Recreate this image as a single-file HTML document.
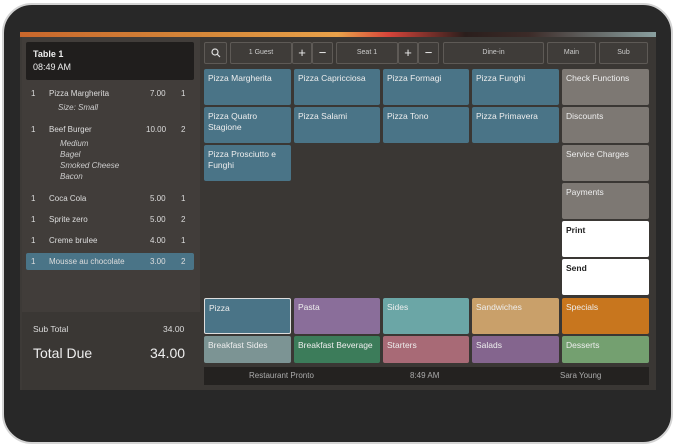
<!DOCTYPE html>
<html><head><style>
*{margin:0;padding:0;box-sizing:border-box}
body{width:676px;height:447px;background:#fff;font-family:"Liberation Sans",sans-serif;position:relative;overflow:hidden}
.frame{position:absolute;left:2px;top:3px;width:671px;height:441px;border-radius:30px;background:#282828;border:2px solid #d4d4d4}
.screen{position:absolute;left:20px;top:32px;width:636px;height:358px;background:#3d3a37;overflow:hidden}
.stripe{position:absolute;left:0;top:0;width:636px;height:5px;background:linear-gradient(90deg,#c9672c 0,#d6893a 30%,#e9a24a 50%,#d7443a 58%,#2a1e1c 70%,#3c2b28 80%,#8aa0a0 100%)}
.left{position:absolute;left:2px;top:5px;width:178px;height:353px;background:#413d3a}
.right{position:absolute;left:180px;top:5px;width:456px;height:353px;background:#3a3734}
.abs{position:absolute}
.hdr{left:4px;top:5px;width:168px;height:38px;background:#201e1d;border-radius:2px;color:#eee;font-size:9px;padding:6px 7px;line-height:13px}
.row{position:absolute;left:4px;width:168px;height:17px;color:#ddd;font-size:8px;line-height:17px}
.row span{position:absolute}
.mod{position:absolute;left:38px;color:#ccc;font-size:8px;font-style:italic}
.btn{position:absolute;border-radius:2px;color:#eee;font-size:8.5px;padding:4px 4px;line-height:11px}
.tb{position:absolute;top:5px;height:22px;border:1px solid #5e5a56;border-radius:2px;color:#ccc;font-size:7px;text-align:center;line-height:20px;background:#3f3c39}
.tile{background:#4a7487}
.grey{background:#7d7873}
</style></head><body>
<div class="frame"></div>
<div class="screen">
<div class="stripe"></div>
<div class="left">
 <div class="abs hdr"><b>Table 1</b><br>08:49 AM</div>
 <div class="row" style="top:48px"><span style="left:5px">1</span><span style="left:23px">Pizza Margherita</span><span style="left:124px">7.00</span><span style="left:155px">1</span></div>
 <div class="mod" style="top:66px;left:36px">Size: Small</div>
 <div class="row" style="top:84px"><span style="left:5px">1</span><span style="left:23px">Beef Burger</span><span style="left:120px">10.00</span><span style="left:155px">2</span></div>
 <div class="mod" style="top:102px">Medium</div>
 <div class="mod" style="top:113px">Bagel</div>
 <div class="mod" style="top:124px">Smoked Cheese</div>
 <div class="mod" style="top:135px">Bacon</div>
 <div class="row" style="top:153px"><span style="left:5px">1</span><span style="left:23px">Coca Cola</span><span style="left:124px">5.00</span><span style="left:155px">1</span></div>
 <div class="row" style="top:174px"><span style="left:5px">1</span><span style="left:23px">Sprite zero</span><span style="left:124px">5.00</span><span style="left:155px">2</span></div>
 <div class="row" style="top:195px"><span style="left:5px">1</span><span style="left:23px">Creme brulee</span><span style="left:124px">4.00</span><span style="left:155px">1</span></div>
 <div class="row" style="top:216px;background:#4a7487;border-radius:2px"><span style="left:5px">1</span><span style="left:23px">Mousse au chocolate</span><span style="left:124px">3.00</span><span style="left:155px">2</span></div>
 <div class="abs" style="left:0;top:275px;width:178px;height:78px;background:#3a3734"></div>
 <div class="abs" style="left:11px;top:287px;color:#ddd;font-size:8.5px">Sub Total</div>
 <div class="abs" style="left:141px;top:287px;color:#ddd;font-size:8.5px">34.00</div>
 <div class="abs" style="left:11px;top:308px;color:#eee;font-size:14px">Total Due</div>
 <div class="abs" style="left:128px;top:308px;color:#eee;font-size:14px">34.00</div>
</div>
<div class="right">
 <div class="tb" style="left:4px;width:23px"><svg width="10" height="10" viewBox="0 0 10 10" style="margin-top:5px"><circle cx="4" cy="4" r="3" fill="none" stroke="#ddd" stroke-width="1.2"/><path d="M6.2 6.2L9 9" stroke="#ddd" stroke-width="1.2"/></svg></div>
 <div class="tb" style="left:30px;width:62px">1 Guest</div>
 <div class="tb" style="left:92px;width:20px;font-size:13px;color:#eee">+</div>
 <div class="tb" style="left:112px;width:21px;font-size:13px;color:#eee">−</div>
 <div class="tb" style="left:136px;width:62px">Seat 1</div>
 <div class="tb" style="left:198px;width:20px;font-size:13px;color:#eee">+</div>
 <div class="tb" style="left:218px;width:21px;font-size:13px;color:#eee">−</div>
 <div class="tb" style="left:243px;width:101px">Dine-in</div>
 <div class="tb" style="left:347px;width:49px">Main</div>
 <div class="tb" style="left:399px;width:49px">Sub</div>

 <div class="btn tile" style="left:4px;top:32px;width:87px;height:36px">Pizza Margherita</div>
 <div class="btn tile" style="left:94px;top:32px;width:86px;height:36px">Pizza Capricciosa</div>
 <div class="btn tile" style="left:183px;top:32px;width:86px;height:36px">Pizza Formagi</div>
 <div class="btn tile" style="left:272px;top:32px;width:87px;height:36px">Pizza Funghi</div>
 <div class="btn tile" style="left:4px;top:70px;width:87px;height:36px">Pizza Quatro Stagione</div>
 <div class="btn tile" style="left:94px;top:70px;width:86px;height:36px">Pizza Salami</div>
 <div class="btn tile" style="left:183px;top:70px;width:86px;height:36px">Pizza Tono</div>
 <div class="btn tile" style="left:272px;top:70px;width:87px;height:36px">Pizza Primavera</div>
 <div class="btn tile" style="left:4px;top:108px;width:87px;height:36px">Pizza Prosciutto e Funghi</div>

 <div class="btn grey" style="left:362px;top:32px;width:87px;height:36px">Check Functions</div>
 <div class="btn grey" style="left:362px;top:70px;width:87px;height:36px">Discounts</div>
 <div class="btn grey" style="left:362px;top:108px;width:87px;height:36px">Service Charges</div>
 <div class="btn grey" style="left:362px;top:146px;width:87px;height:36px">Payments</div>
 <div class="btn" style="left:362px;top:184px;width:87px;height:36px;background:#fff;color:#222;font-weight:bold">Print</div>
 <div class="btn" style="left:362px;top:222px;width:87px;height:36px;background:#fff;color:#222;font-weight:bold">Send</div>

 <div class="btn" style="left:4px;top:261px;width:87px;height:36px;background:#4a7487;border:1px solid #ddd">Pizza</div>
 <div class="btn" style="left:94px;top:261px;width:86px;height:36px;background:#8a6e9a">Pasta</div>
 <div class="btn" style="left:183px;top:261px;width:86px;height:36px;background:#6ba6a6">Sides</div>
 <div class="btn" style="left:272px;top:261px;width:87px;height:36px;background:#c9a06a">Sandwiches</div>
 <div class="btn" style="left:362px;top:261px;width:87px;height:36px;background:#c8761e">Specials</div>
 <div class="btn" style="left:4px;top:299px;width:87px;height:27px;background:#7c9494">Breakfast Sides</div>
 <div class="btn" style="left:94px;top:299px;width:86px;height:27px;background:#3c7c5a">Breakfast Beverage</div>
 <div class="btn" style="left:183px;top:299px;width:86px;height:27px;background:#a86a76">Starters</div>
 <div class="btn" style="left:272px;top:299px;width:87px;height:27px;background:#84658e">Salads</div>
 <div class="btn" style="left:362px;top:299px;width:87px;height:27px;background:#74a070">Desserts</div>

 <div class="abs" style="left:4px;top:330px;width:445px;height:18px;background:#242220;color:#aaa;font-size:8px;line-height:18px">
  <span class="abs" style="left:45px">Restaurant Pronto</span>
  <span class="abs" style="left:206px">8:49 AM</span>
  <span class="abs" style="left:356px">Sara Young</span>
 </div>
</div>
</div>
</body></html>
